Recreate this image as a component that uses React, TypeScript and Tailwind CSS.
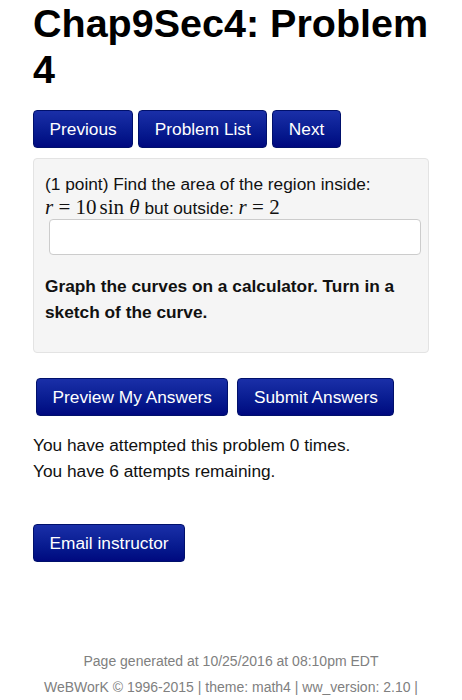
import React from 'react';

const btn =
  'rounded-[4px] border border-[#00106b] bg-gradient-to-b from-[#1a2fa8] to-[#00087f] text-white text-[17.3px] leading-[20px] px-[15.5px] py-[8px]';

function MathR() {
  return <span className="italic">r</span>;
}

export default function App() {
  return (
    <div className="min-h-[700px] bg-white px-[33px] text-[#111] font-['Liberation_Sans',Arial,sans-serif]">
      <h1 className="pt-0 text-[39.5px] font-bold leading-[46px] text-black">
        Chap9Sec4: Problem 4
      </h1>

      <div className="mt-[18px] flex gap-[5px]">
        <button type="button" className={btn}>Previous</button>
        <button type="button" className={btn}>Problem List</button>
        <button type="button" className={btn}>Next</button>
      </div>

      <div className="mt-[10px] rounded-[4px] border border-[#e3e3e3] bg-[#f5f5f5] px-[11px] pt-[13px] pb-[27px] text-[17.3px]">
        <p className="leading-[24px]">(1 point) Find the area of the region inside:</p>
        <p className="h-[22px] leading-[22px]">
          <span className="font-['Liberation_Serif','DejaVu_Serif',serif] text-[21px]">
            <MathR /> = 10<span className="ml-[3px]">sin</span> <span className="italic">θ</span>
          </span>{' '}
          but outside:{' '}
          <span className="font-['Liberation_Serif','DejaVu_Serif',serif] text-[21px]">
            <MathR /> = 2
          </span>
        </p>
        <input
          type="text"
          className="mt-[1px] ml-[4px] block h-[36px] w-[372px] rounded-[4px] border border-[#cccccc] bg-white"
        />
        <p className="mt-[18px] font-bold leading-[26px]">
          Graph the curves on a calculator. Turn in a sketch of the curve.
        </p>
      </div>

      <div className="mt-[25px] flex gap-[9px] pl-[3px]">
        <button type="button" className={btn}>Preview My Answers</button>
        <button type="button" className={btn}>Submit Answers</button>
      </div>

      <div className="mt-[16px] text-[17.3px] leading-[26px]">
        <p>You have attempted this problem 0 times.</p>
        <p>You have 6 attempts remaining.</p>
      </div>

      <div className="mt-[40px]">
        <button type="button" className={btn}>Email instructor</button>
      </div>

      <footer className="mt-[86px] text-center text-[14px] leading-[26px] text-[#808080]">
        <p>Page generated at 10/25/2016 at 08:10pm EDT</p>
        <p>WeBWorK © 1996-2015 | theme: math4 | ww_version: 2.10 |</p>
      </footer>
    </div>
  );
}
